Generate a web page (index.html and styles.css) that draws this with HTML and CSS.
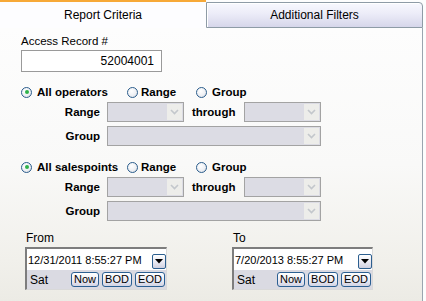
FILE: index.html
```html
<!DOCTYPE html>
<html>
<head>
<meta charset="utf-8">
<link rel="stylesheet" href="styles.css">
</head>
<body>
<div class="panel">
  <div class="tabs">
    <div class="tab tab-active">Report Criteria</div>
    <div class="tab tab-idle">Additional Filters</div>
  </div>
  <div class="content">
    <div class="field-label">Access Record #</div>
    <div class="textbox">52004001</div>

    <div class="block block-first">
      <div class="radio-row">
        <div class="radio-item col1"><span class="radio on"></span><span class="rlabel">All operators</span></div>
        <div class="radio-item col2"><span class="radio"></span><span class="rlabel tight">Range</span></div>
        <div class="radio-item col3"><span class="radio"></span><span class="rlabel">Group</span></div>
      </div>
      <div class="row">
        <span class="row-label">Range</span>
        <span class="select short"><span class="arrow"><svg width="9" height="6" viewBox="0 0 9 6"><path d="M1 1 L4.5 4.5 L8 1" fill="none" stroke="#c3c7cc" stroke-width="1.6"/></svg></span></span>
        <span class="through">through</span>
        <span class="select short"><span class="arrow"><svg width="9" height="6" viewBox="0 0 9 6"><path d="M1 1 L4.5 4.5 L8 1" fill="none" stroke="#c3c7cc" stroke-width="1.6"/></svg></span></span>
      </div>
      <div class="row row-gap">
        <span class="row-label">Group</span>
        <span class="select wide"><span class="arrow"><svg width="9" height="6" viewBox="0 0 9 6"><path d="M1 1 L4.5 4.5 L8 1" fill="none" stroke="#c3c7cc" stroke-width="1.6"/></svg></span></span>
      </div>
    </div>

    <div class="block block-second">
      <div class="radio-row">
        <div class="radio-item col1"><span class="radio on"></span><span class="rlabel">All salespoints</span></div>
        <div class="radio-item col2"><span class="radio"></span><span class="rlabel tight">Range</span></div>
        <div class="radio-item col3"><span class="radio"></span><span class="rlabel">Group</span></div>
      </div>
      <div class="row">
        <span class="row-label">Range</span>
        <span class="select short"><span class="arrow"><svg width="9" height="6" viewBox="0 0 9 6"><path d="M1 1 L4.5 4.5 L8 1" fill="none" stroke="#c3c7cc" stroke-width="1.6"/></svg></span></span>
        <span class="through">through</span>
        <span class="select short"><span class="arrow"><svg width="9" height="6" viewBox="0 0 9 6"><path d="M1 1 L4.5 4.5 L8 1" fill="none" stroke="#c3c7cc" stroke-width="1.6"/></svg></span></span>
      </div>
      <div class="row row-gap">
        <span class="row-label">Group</span>
        <span class="select wide"><span class="arrow"><svg width="9" height="6" viewBox="0 0 9 6"><path d="M1 1 L4.5 4.5 L8 1" fill="none" stroke="#c3c7cc" stroke-width="1.6"/></svg></span></span>
      </div>
    </div>

    <div class="dates">
      <div class="date-col date-from">
        <div class="date-label">From</div>
        <div class="datebox">
          <div class="date-top">
            <span class="date-text">12/31/2011 8:55:27 PM</span>
            <span class="dd-btn"><svg width="8" height="5" viewBox="0 0 8 5"><path d="M0 0 H8 L4 4.5 Z" fill="#000"/></svg></span>
          </div>
          <div class="date-bottom">
            <span class="day">Sat</span>
            <span class="btns"><span class="btn b-now">Now</span><span class="btn b-bod">BOD</span><span class="btn b-eod">EOD</span></span>
          </div>
        </div>
      </div>
      <div class="date-col date-to">
        <div class="date-label">To</div>
        <div class="datebox">
          <div class="date-top">
            <span class="date-text">7/20/2013 8:55:27 PM</span>
            <span class="dd-btn"><svg width="8" height="5" viewBox="0 0 8 5"><path d="M0 0 H8 L4 4.5 Z" fill="#000"/></svg></span>
          </div>
          <div class="date-bottom">
            <span class="day">Sat</span>
            <span class="btns"><span class="btn b-now">Now</span><span class="btn b-bod">BOD</span><span class="btn b-eod">EOD</span></span>
          </div>
        </div>
      </div>
    </div>
  </div>
</div>
</body>
</html>
```

FILE: styles.css
```css
* { box-sizing: border-box; }
html, body { margin: 0; padding: 0; }
body {
  width: 426px;
  height: 301px;
  overflow: hidden;
  background: #fdfdfd;
  font-family: "Liberation Sans", Arial, sans-serif;
  color: #000;
}
.panel {
  width: 423px;
  height: 301px;
  display: flex;
  flex-direction: column;
}
.tabs {
  display: flex;
  height: 28px;
  flex: none;
}
.tab {
  font-size: 12px;
  text-align: center;
}
.tab-active {
  width: 206px;
  height: 28px;
  border-top: 2px solid #f7a938;
  line-height: 26px;
  background: #fdfdff;
}
.tab-idle {
  width: 217px;
  height: 26px;
  margin-top: 2px;
  border: 1px solid #8e9ba6;
  border-top-right-radius: 4px;
  line-height: 24px;
  background: linear-gradient(#f8f8fe, #ececf8 45%, #d6d6ea);
  box-shadow: inset 1px 1px 0 #ffffff;
}
.content {
  flex: 1;
  border-right: 1px solid #9aa5af;
  padding: 6px 0 0 21px;
  background: linear-gradient(#fdfdfd, #f9f9f8 50%, #f1f0eb 85%, #ecebe5);
}
.field-label {
  font-size: 11.5px;
  line-height: 14px;
  height: 14px;
}
.textbox {
  margin-top: 2px;
  width: 141px;
  height: 22px;
  border: 1px solid #9a9a9a;
  background: #fff;
  font-size: 12px;
  line-height: 20px;
  text-align: right;
  padding-right: 7px;
}
.block-first { margin-top: 12px; }
.block-second { margin-top: 13px; }
.radio-row {
  display: flex;
  height: 16px;
  align-items: center;
  font-size: 11.5px;
  font-weight: bold;
}
.radio-item {
  display: flex;
  align-items: center;
}
.col1 { width: 106px; }
.col2 { width: 69px; }
.radio {
  width: 11px;
  height: 11px;
  border: 1px solid #2b5d8c;
  border-radius: 50%;
  background: radial-gradient(circle at 40% 35%, #ffffff, #eef0f4 55%, #cfd4dc);
  display: flex;
  align-items: center;
  justify-content: center;
  flex: none;
}
.radio.on::after {
  content: "";
  width: 4px;
  height: 4px;
  border-radius: 50%;
  background: #2fb24a;
}
.rlabel { margin-left: 5px; line-height: 16px; }
.rlabel.tight { margin-left: 3px; }
.row {
  display: flex;
  align-items: center;
  height: 20px;
  margin-top: 2px;
  font-size: 11.5px;
  font-weight: bold;
}
.row-gap { margin-top: 4px; }
.row-label {
  width: 79px;
  margin-right: 7px;
  text-align: right;
  line-height: 20px;
}
.through {
  width: 52px;
  margin-left: 8px;
  line-height: 20px;
}
.select {
  height: 20px;
  border: 1px solid #a3a3a3;
  background: #dcdce4;
  display: flex;
  justify-content: flex-end;
  padding: 1px;
}
.select.short { width: 77px; }
.select.wide { width: 214px; }
.arrow {
  width: 15px;
  height: 100%;
  background: #ededea;
  display: flex;
  align-items: center;
  justify-content: center;
}
.dates {
  display: flex;
  margin-top: 10px;
  margin-left: 4px;
}
.date-col { display: flex; flex-direction: column; }
.date-from { width: 142px; }
.date-to { width: 141px; margin-left: 65px; }
.date-label {
  font-size: 12px;
  line-height: 14px;
  height: 14px;
  padding-left: 1px;
}
.datebox {
  margin-top: 2px;
  height: 43px;
  border-top: 2px solid #7d7d7d;
  border-left: 2px solid #7d7d7d;
  border-right: 1px solid #d9d9d9;
  border-bottom: 1px solid #d9d9d9;
  display: flex;
  flex-direction: column;
}
.date-top {
  height: 21px;
  background: #fff;
  display: flex;
  align-items: center;
  justify-content: space-between;
  padding-left: 1px;
  padding-right: 0;
}
.date-text {
  font-size: 11px;
  line-height: 14px;
}
.dd-btn {
  width: 14px;
  height: 15px;
  margin-top: 4px;
  border: 1px solid #2c5f8f;
  border-radius: 2px;
  background: linear-gradient(#ffffff, #e6e6f0 60%, #cfd0e0);
  display: flex;
  align-items: center;
  justify-content: center;
}
.date-bottom {
  flex: 1;
  background: #dadae2;
  display: flex;
  align-items: center;
  justify-content: space-between;
  padding-left: 3px;
  padding-right: 1px;
}
.day { font-size: 12px; }
.btns { display: flex; gap: 3px; }
.btn {
  height: 15px;
  border: 1px solid #2b5f92;
  border-radius: 3px;
  background: linear-gradient(#ffffff, #ececf4 55%, #d3d4e4);
  font-size: 11px;
  line-height: 13px;
  text-align: center;
}
.b-now { width: 28px; }
.b-bod { width: 30px; }
.b-eod { width: 30px; }
```
